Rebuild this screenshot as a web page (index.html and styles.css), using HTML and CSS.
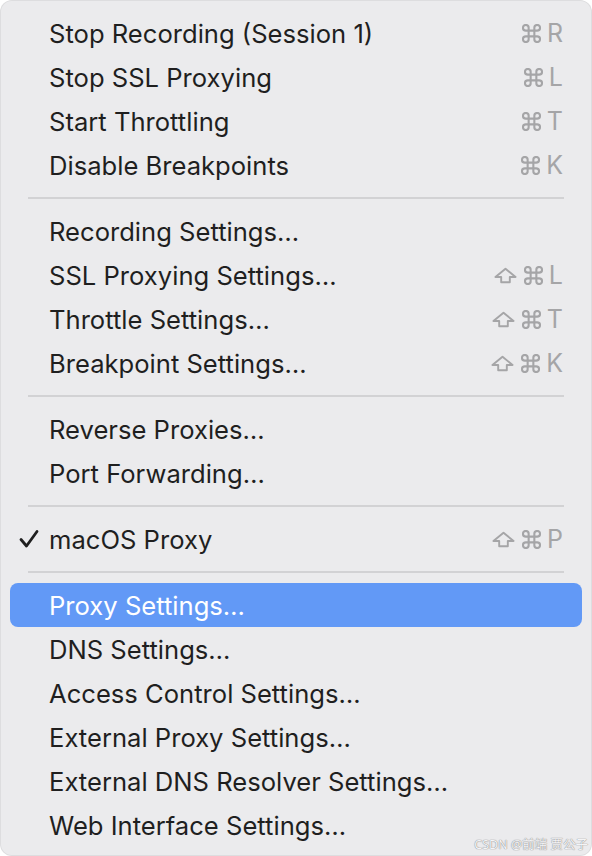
FILE: index.html
```html
<!DOCTYPE html>
<html lang="en">
<head>
  <meta charset="UTF-8">
  <title>Proxy Menu</title>
  <link rel="stylesheet" href="styles.css">
</head>
<body>
  <svg width="0" height="0" style="position:absolute">
    <symbol id="cmd" viewBox="2 2 20 20"><path d="M15 6v12a3 3 0 1 0 3-3H6a3 3 0 1 0 3 3V6a3 3 0 1 0-3 3h12a3 3 0 1 0-3-3" fill="none" stroke="currentColor" stroke-width="2.2" stroke-linecap="round" stroke-linejoin="round"/></symbol>
    <symbol id="shift" viewBox="0 0 24 17"><path d="M12 1.5 L22.5 10 H16.5 V15.5 H7.5 V10 H1.5 Z" fill="none" stroke="currentColor" stroke-width="2" stroke-linejoin="round"/></symbol>
  </svg>
  <div class="menu">
    <div class="item"><span class="label">Stop Recording (Session 1)</span><span class="keys"><svg class="cmd"><use href="#cmd"/></svg>R</span></div>
    <div class="item"><span class="label">Stop SSL Proxying</span><span class="keys"><svg class="cmd"><use href="#cmd"/></svg>L</span></div>
    <div class="item"><span class="label">Start Throttling</span><span class="keys"><svg class="cmd"><use href="#cmd"/></svg>T</span></div>
    <div class="item"><span class="label">Disable Breakpoints</span><span class="keys"><svg class="cmd"><use href="#cmd"/></svg>K</span></div>
    <div class="sep"></div>
    <div class="item"><span class="label">Recording Settings…</span></div>
    <div class="item"><span class="label">SSL Proxying Settings…</span><span class="keys"><svg class="shift"><use href="#shift"/></svg><svg class="cmd"><use href="#cmd"/></svg>L</span></div>
    <div class="item"><span class="label">Throttle Settings…</span><span class="keys"><svg class="shift"><use href="#shift"/></svg><svg class="cmd"><use href="#cmd"/></svg>T</span></div>
    <div class="item"><span class="label">Breakpoint Settings…</span><span class="keys"><svg class="shift"><use href="#shift"/></svg><svg class="cmd"><use href="#cmd"/></svg>K</span></div>
    <div class="sep"></div>
    <div class="item"><span class="label">Reverse Proxies…</span></div>
    <div class="item"><span class="label">Port Forwarding…</span></div>
    <div class="sep"></div>
    <div class="item">
      <svg class="check" width="20" height="20" viewBox="0 0 20 20"><path d="M2 10.5 L7.5 17 L18 2.5" fill="none" stroke="#1f1f1f" stroke-width="2.8" stroke-linecap="round" stroke-linejoin="round"/></svg>
      <span class="label">macOS Proxy</span><span class="keys"><svg class="shift"><use href="#shift"/></svg><svg class="cmd"><use href="#cmd"/></svg>P</span>
    </div>
    <div class="sep"></div>
    <div class="item active"><span class="label">Proxy Settings…</span></div>
    <div class="item"><span class="label">DNS Settings…</span></div>
    <div class="item"><span class="label">Access Control Settings…</span></div>
    <div class="item"><span class="label">External Proxy Settings…</span></div>
    <div class="item"><span class="label">External DNS Resolver Settings…</span></div>
    <div class="item"><span class="label">Web Interface Settings…</span></div>
    <div class="watermark">CSDN @前端 贾公子</div>
  </div>
</body>
</html>
```

FILE: styles.css
```css
body {
  margin: 0;
  background-color: #ffffff;
  font-family: Inter, "Noto Sans", sans-serif;
}
.menu {
  position: relative;
  width: 592px;
  height: 856px;
  box-sizing: border-box;
  padding: 11px 10px 9px 10px;
  background-color: #ebebed;
  border-radius: 12px;
  box-shadow: inset 0 0 0 1px rgba(0, 0, 0, 0.06);
}
.item {
  position: relative;
  display: flex;
  align-items: center;
  height: 44px;
  padding: 0 19px 0 39px;
  border-radius: 8px;
  color: #1f1f1f;
  font-size: 25.6px;
}
.label {
  flex: 1;
}
.keys {
  display: flex;
  align-items: center;
  color: #a5a5a7;
  font-size: 25px;
}
.cmd {
  width: 19px;
  height: 19px;
  margin-right: 6px;
}
.shift {
  width: 23px;
  height: 17px;
  margin-right: 7px;
}
.check {
  position: absolute;
  left: 9px;
  top: 12px;
}
.item.active {
  background-color: #6299f6;
  color: #ffffff;
}
.sep {
  height: 22px;
  display: flex;
  align-items: center;
  padding: 0 18px;
}
.sep::before {
  content: "";
  flex: 1;
  height: 2px;
  background-color: #d2d2d4;
}
.watermark {
  position: absolute;
  right: 4px;
  bottom: 3px;
  font-family: "Noto Sans", "Noto Sans CJK SC", sans-serif;
  font-size: 12.5px;
  color: #f4f4f6;
  text-shadow: 0 0 1px #8a8a8c, 0 0 1px #8a8a8c;
}
```
